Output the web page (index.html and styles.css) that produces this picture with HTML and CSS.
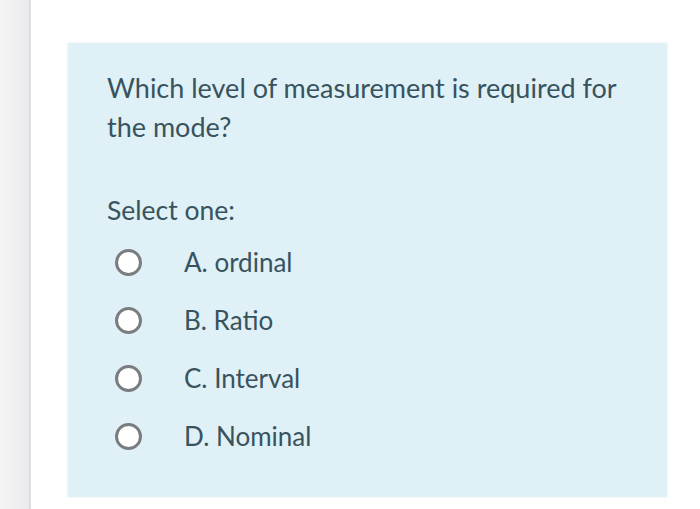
FILE: index.html
```html
<!DOCTYPE html>
<html>
<head>
<meta charset="utf-8">
<link rel="stylesheet" href="styles.css">
</head>
<body>
<div class="page">
  <div class="rail"></div>
  <main class="main">
    <section class="card">
      <p class="question">Which level of measurement is required for the mode?</p>
      <p class="prompt">Select one:</p>
      <div class="options">
        <label class="option"><span class="radio"></span><span class="label">A. ordinal</span></label>
        <label class="option"><span class="radio"></span><span class="label">B. Ratio</span></label>
        <label class="option"><span class="radio"></span><span class="label">C. Interval</span></label>
        <label class="option"><span class="radio"></span><span class="label">D. Nominal</span></label>
      </div>
    </section>
  </main>
</div>
</body>
</html>
```
FILE: styles.css
```css
* { box-sizing: border-box; }
html, body { margin: 0; padding: 0; background: #ffffff; }
body { width: 700px; height: 509px; overflow: hidden; font-family: Lato, "Open Sans", sans-serif; color: #38535d; }
.page { display: flex; height: 509px; }
.rail { width: 31px; flex: none; background: linear-gradient(to right, #f4f4f4, #ebebee); border-right: 2px solid #dcdce4; }
.main { flex: 1; min-width: 0; padding: 43px 33px 12px 37px; }
.card { background: #dff0f7; height: 454px; padding: 25px 20px 0 39px; box-shadow: 0 0 2px rgba(200,210,200,0.5); }
.question { margin: 0; font-size: 27px; line-height: 39px; }
.prompt { margin: 46px 0 0; font-size: 26.5px; line-height: 36px; }
.options { display: flex; flex-direction: column; gap: 22px; margin-top: 16px; }
.option { display: flex; align-items: center; height: 36px; }
.radio { width: 27px; height: 27px; border: 3px solid #7a7d80; border-radius: 50%; background: #ffffff; margin-left: 8px; flex: none; }
.label { margin-left: 42px; font-size: 26px; }
```
